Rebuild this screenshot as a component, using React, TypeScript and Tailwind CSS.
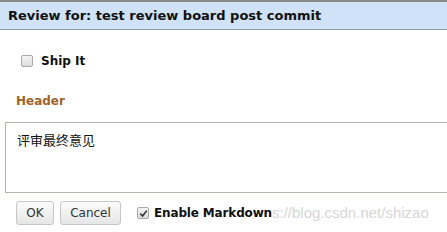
import React from "react";

export default function App() {
  return (
    <div className="relative w-[447px] h-[232px] overflow-hidden bg-white" style={{ fontFamily: '"DejaVu Sans", Verdana, sans-serif' }}>
      <div className="h-[2px] bg-[#8a8a8a]" />
      <div className="h-[28px] bg-[#cfe2f7] border-b border-[#8f9aa6] flex items-center pl-[8px]">
        <span className="text-[13px] font-bold text-[#111]">Review for: test review board post commit</span>
      </div>
      <div className="flex items-center mt-[24px] pl-[21px] h-[14px]">
        <span className="w-[12px] h-[12px] rounded-[2px] border border-[#a9a9a9] bg-gradient-to-b from-[#f4f4f4] to-[#dcdcdc]" />
        <span className="ml-[8px] text-[12px] font-bold text-[#111]">Ship It</span>
      </div>
      <div className="mt-[25px] pl-[16px] text-[12px] font-bold text-[#a0622a] leading-[16px]">Header</div>
      <div className="mt-[13px] ml-[5px] h-[71px] border border-[#b5b5ab] border-r-0 pl-[11px] pt-[9px] text-[13px] leading-[16px] text-[#111]" style={{ fontFamily: '"Noto Sans CJK SC", "DejaVu Sans", sans-serif' }}>
        评审最终意见
      </div>
      <div className="flex items-center mt-[8px] pl-[16px] h-[24px]">
        <button className="w-[38px] h-[24px] border border-[#c6c6c6] rounded-[3px] bg-gradient-to-b from-[#fbfbfb] to-[#e6e6e6] text-[12px] text-[#333]">OK</button>
        <button className="ml-[6px] w-[61px] h-[24px] border border-[#c6c6c6] rounded-[3px] bg-gradient-to-b from-[#fbfbfb] to-[#e6e6e6] text-[12px] text-[#333]">Cancel</button>
        <span className="ml-[16px] w-[12px] h-[12px] rounded-[2px] border border-[#a9a9a9] bg-gradient-to-b from-[#f4f4f4] to-[#dcdcdc] flex items-center justify-center">
          <svg width="9" height="9" viewBox="0 0 10 10"><path d="M1.5 5.2 L4 7.8 L8.6 1.8" stroke="#333" strokeWidth="1.8" fill="none" /></svg>
        </span>
        <span className="ml-[5px] text-[12px] font-bold text-[#111] tracking-[-0.15px]">Enable Markdown</span>
      </div>
      <div className="absolute left-[272px] top-[204px] text-[15px] leading-[18px] text-[#d6d6d6]" style={{ fontFamily: '"Liberation Sans", Arial, sans-serif' }}>s://blog.csdn.net/shizao</div>
    </div>
  );
}
